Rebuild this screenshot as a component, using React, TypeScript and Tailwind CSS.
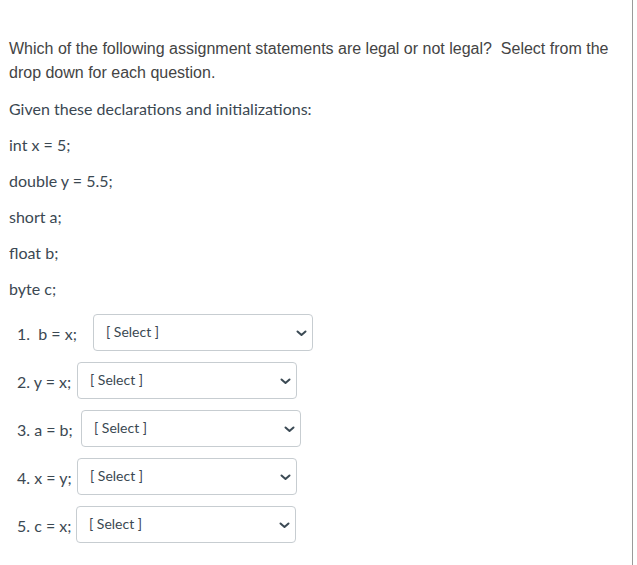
import React from 'react';

const rows = [
    { label: '1.  b = x;', labelW: 'w-[76px]' },
    { label: '2. y = x;', labelW: 'w-[60px]' },
    { label: '3. a = b;', labelW: 'w-[64px]' },
    { label: '4. x = y;', labelW: 'w-[60px]' },
    { label: '5. c = x;', labelW: 'w-[59px]' },
];

const declarations = ['int x = 5;', 'double y = 5.5;', 'short a;', 'float b;', 'byte c;'];

function Chevron() {
    return (
        <svg width="11" height="7" viewBox="0 0 11 7" className="shrink-0">
            <path d="M1.5 1.5 L5.5 5 L9.5 1.5" fill="none" stroke="#3b4a54" strokeWidth="2" strokeLinecap="round" strokeLinejoin="round" />
        </svg>
    );
}

export default function App() {
    return (
        <div className="w-[633px] min-h-screen bg-white border-r border-[#9a9a9a]">
            <div className="pt-[37px] pl-[9px] pr-[14px] text-[#3b4852] font-['Lato','Noto_Sans',sans-serif] text-[16px] leading-[24px]">
                {/* Prompt */}
                <p className="font-['Liberation_Sans',Arial,sans-serif] text-[#444] whitespace-pre-wrap">
                    Which of the following assignment statements are legal or not legal?  Select from the drop down for each question.
                </p>
                <p className="mt-[12px]">Given these declarations and initializations:</p>

                {declarations.map((d) => (
                    <p key={d} className="mt-[12px]">{d}</p>
                ))}

                {/* Questions */}
                <div className="mt-[13px] flex flex-col gap-[11px]">
                    {rows.map((r) => (
                        <div key={r.label} className="flex items-start pl-[8px]">
                            <span className={`${r.labelW} mt-[8px] whitespace-pre`}>{r.label}</span>
                            <div className="w-[220px] h-[37px] border border-[#c7cdd1] rounded-[4px] bg-white flex justify-between pl-[12px] pr-[5px]">
                                <span className="pt-[7px] text-[14px] leading-[20px]">[ Select ]</span>
                                <span className="self-center mt-[1px]"><Chevron /></span>
                            </div>
                        </div>
                    ))}
                </div>
            </div>
        </div>
    );
}
